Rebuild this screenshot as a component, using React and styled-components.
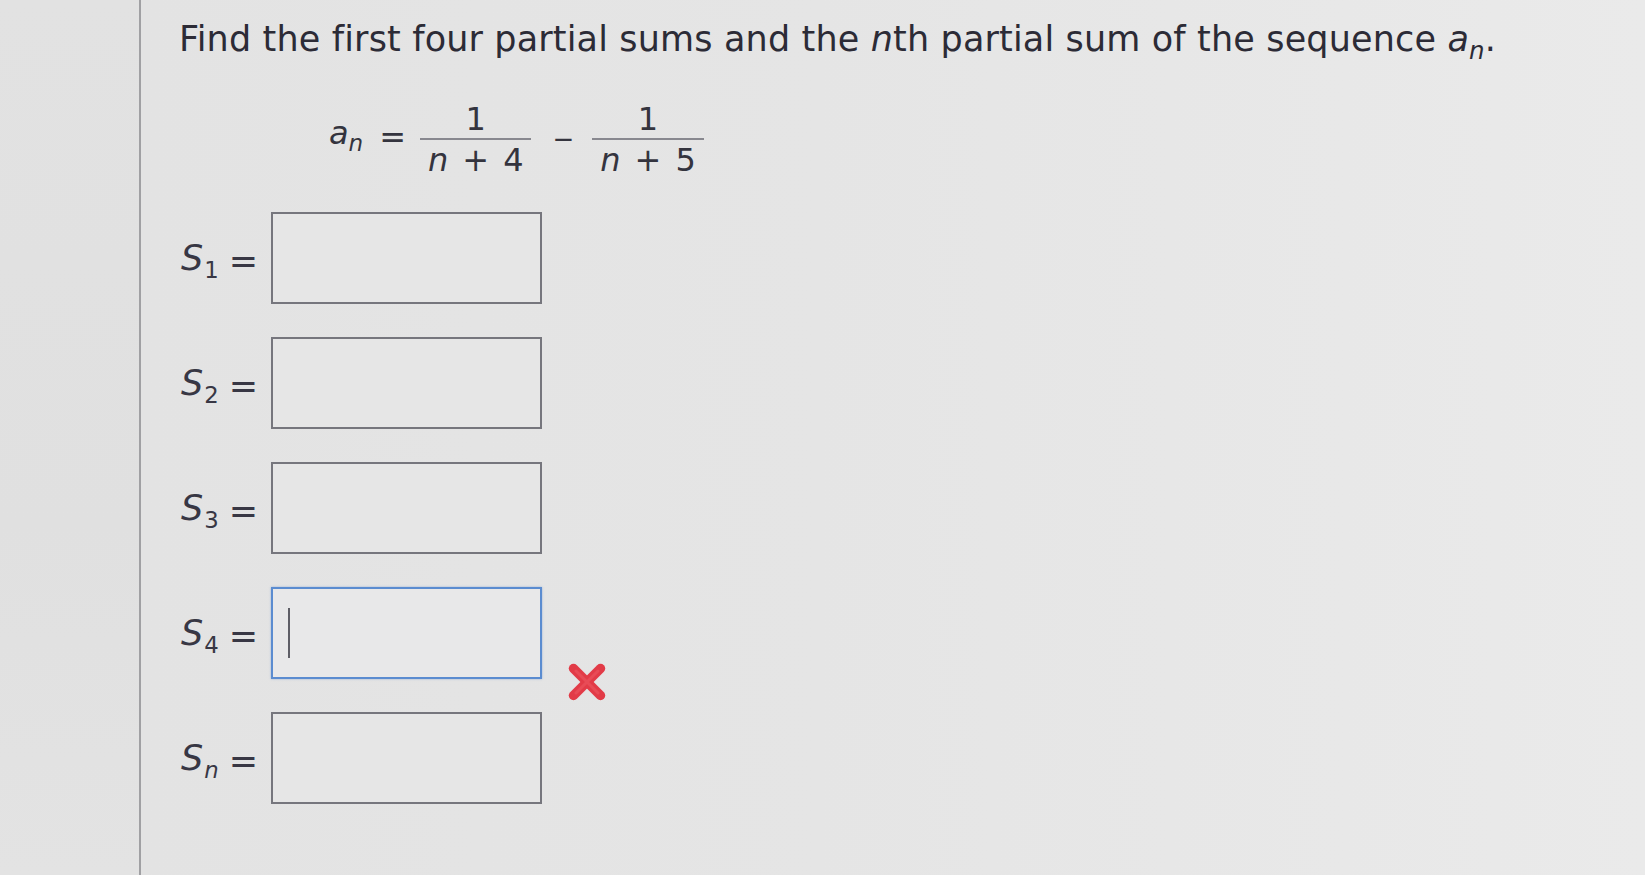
import React from "react";
import styled, { createGlobalStyle } from "styled-components";

const GlobalStyle = createGlobalStyle`
  html, body {
    margin: 0;
    padding: 0;
    height: 100%;
  }
  body {
    background: #e4e4e4;
    font-family: "DejaVu Sans", Verdana, "Liberation Sans", sans-serif;
  }
  #root {
    height: 100%;
  }
`;

const Page = styled.div`
  display: flex;
  width: 100%;
  min-height: 100vh;
  overflow: hidden;
`;

const Sidebar = styled.aside`
  width: 139px;
  flex-shrink: 0;
  background: linear-gradient(180deg, #e2e2e2 0%, #e0e0e0 60%, #e3e3e3 100%);
  border-right: 2px solid #a0a0a3;
`;

const Main = styled.main`
  flex: 1;
  padding: 19px 0 0 38px;
  background: linear-gradient(90deg, #e3e3e3 0%, #e5e5e5 45%, #e8e8e8 80%, #eaeaea 100%);
  color: #2c2b36;
`;

const Title = styled.h1`
  margin: 0;
  font-size: 35px;
  font-weight: normal;
  line-height: 40px;
  letter-spacing: 0.15px;
  color: #2c2b36;
  white-space: nowrap;
`;

const Var = styled.i`
  font-style: italic;
`;

const Sub = styled.sub`
  font-size: ${(p) => p.$size || 0.7}em;
  vertical-align: ${(p) => p.$drop || -0.32}em;
  line-height: 0;
  font-style: ${(p) => (p.$italic ? "italic" : "normal")};
`;

const Formula = styled.div`
  display: flex;
  align-items: center;
  margin: 44px 0 0 150px;
  font-size: 32px;
  color: #34343e;
`;

const MathText = styled.span`
  font-size: ${(p) => p.$size || 32}px;
  line-height: 31px;
  margin: 0 ${(p) => p.$right || 0}px ${(p) => p.$lift || 0}px ${(p) => p.$left || 0}px;
  white-space: nowrap;
`;

const Fraction = styled.span`
  display: inline-flex;
  flex-direction: column;
  align-items: stretch;
  margin: 0 ${(p) => p.$right || 0}px 0 ${(p) => p.$left || 0}px;
`;

const Numerator = styled.span`
  text-align: center;
  padding: 1px 8px 4px;
  line-height: 30px;
  border-bottom: 2px solid #88888f;
`;

const Denominator = styled.span`
  display: flex;
  justify-content: center;
  padding: 5px 8px 0;
  line-height: 30px;
`;

const Op = styled.span`
  margin: 0 14px;
`;

const AnswerGrid = styled.div`
  display: grid;
  grid-template-columns: 80px 271px auto;
  column-gap: 12px;
  row-gap: 33px;
  align-items: center;
  justify-content: start;
  margin-top: 37px;
`;

const Label = styled.div`
  text-align: right;
  font-size: 35px;
  line-height: 35px;
  letter-spacing: 1px;
  white-space: nowrap;
  color: #383744;
`;

const Equals = styled.span`
  display: inline-block;
  margin-left: 9px;
  transform: translateY(3px);
`;

const AnswerBox = styled.div`
  box-sizing: border-box;
  width: 271px;
  height: 92px;
  display: flex;
  align-items: center;
  padding-left: 15px;
  background: ${(p) => (p.$focused ? "#e8e8e9" : "#e6e6e6")};
  border: 2px solid ${(p) => (p.$focused ? "#5b8cd0" : "#76767d")};
  box-shadow: ${(p) => (p.$focused ? "0 0 2px rgba(91, 140, 208, 0.55)" : "none")};
`;

const Caret = styled.span`
  width: 2px;
  height: 50px;
  background: #5e5e66;
`;

const Empty = styled.span``;

const WrongMark = styled.span`
  align-self: end;
  display: flex;
  width: 40px;
  height: 40px;
  margin: 0 0 -23px 13px;
`;

const CrossIcon = () => (
  <svg width="40" height="40" viewBox="0 0 40 40" aria-label="incorrect">
    <g stroke="#e23b47" strokeWidth="9.5" strokeLinecap="round">
      <line x1="6.5" y1="6.5" x2="33.5" y2="33.5" />
      <line x1="33.5" y1="6.5" x2="6.5" y2="33.5" />
    </g>
    <g stroke="#ef5c66" strokeWidth="3" strokeLinecap="round" opacity="0.5">
      <line x1="9" y1="9" x2="31" y2="31" />
      <line x1="31" y1="9" x2="9" y2="31" />
    </g>
  </svg>
);

const rows = [
  { sub: "1" },
  { sub: "2" },
  { sub: "3" },
  { sub: "4", focused: true, wrong: true },
  { sub: "n", italic: true },
];

export default function App() {
  return (
    <>
      <GlobalStyle />
      <Page>
        <Sidebar />
        <Main>
          <Title>
            Find the first four partial sums and the <Var>n</Var>th partial sum of the sequence{" "}
            <Var>a</Var>
            <Sub $italic>n</Sub>.
          </Title>

          <Formula>
            <MathText $lift={11}>
              <Var>a</Var>
              <Sub $italic $size={0.72}>n</Sub>
            </MathText>
            <MathText $lift={3} $left={16}>=</MathText>
            <Fraction $left={14}>
              <Numerator>1</Numerator>
              <Denominator>
                <Var>n</Var>
                <Op>+</Op>
                4
              </Denominator>
            </Fraction>
            <MathText $size={26} $left={21} $right={18}>−</MathText>
            <Fraction>
              <Numerator>1</Numerator>
              <Denominator>
                <Var>n</Var>
                <Op>+</Op>
                5
              </Denominator>
            </Fraction>
          </Formula>

          <AnswerGrid>
            {rows.map((r) => (
              <React.Fragment key={r.sub}>
                <Label>
                  <Var>S</Var>
                  <Sub $italic={r.italic} $size={0.65} $drop={-0.36}>
                    {r.sub}
                  </Sub>
                  <Equals>=</Equals>
                </Label>
                <AnswerBox $focused={r.focused}>{r.focused && <Caret />}</AnswerBox>
                {r.wrong ? (
                  <WrongMark>
                    <CrossIcon />
                  </WrongMark>
                ) : (
                  <Empty />
                )}
              </React.Fragment>
            ))}
          </AnswerGrid>
        </Main>
      </Page>
    </>
  );
}
